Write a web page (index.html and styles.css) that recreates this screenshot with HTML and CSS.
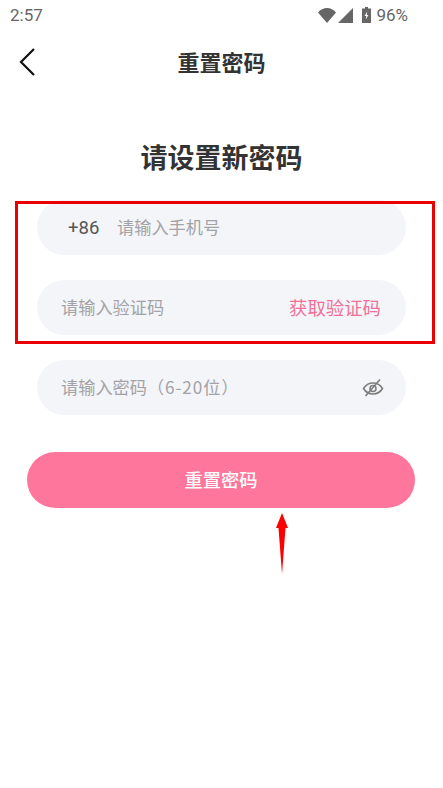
FILE: index.html
```html
<!DOCTYPE html>
<html lang="zh-CN">
<head>
<meta charset="UTF-8">
<meta name="viewport" content="width=device-width, initial-scale=1.0">
<title>重置密码</title>
<link rel="stylesheet" href="styles.css">
</head>
<body>
<div class="page">
  <div class="status-bar">
    <span class="time">2:57</span>
    <div class="status-icons">
      <svg class="wifi" width="18" height="15" viewBox="0 0 18 15"><path d="M0 4.500C2.500 1.500 5.500 0 9 0S15.500 1.500 18 4.500L9 15Z" fill="#666"/></svg>
      <svg class="signal" width="15" height="15" viewBox="0 0 15 15"><path d="M15 0V15H0Z" fill="#666"/></svg>
      <svg class="battery" width="9" height="16" viewBox="0 0 9 16"><path d="M3 0H6V1.500H9V16H0V1.500H3Z" fill="#666"/><path d="M5.200 4.500L2.600 9H4.300L3.800 12.500L6.400 8H4.700Z" fill="#fff"/></svg>
      <span class="battery-text">96%</span>
    </div>
  </div>

  <div class="nav-bar">
    <svg class="back" width="16" height="28" viewBox="0 0 16 28"><path d="M15 1L2 14L15 27" fill="none" stroke="#111" stroke-width="2.200"/></svg>
    <h2>重置密码</h2>
  </div>

  <h1>请设置新密码</h1>

  <div class="form">
    <div class="field">
      <span class="code">+86</span>
      <span class="hint">请输入手机号</span>
    </div>
    <div class="field">
      <span class="hint">请输入验证码</span>
      <span class="get-code">获取验证码</span>
    </div>
    <div class="field">
      <span class="hint">请输入密码<span class="hint-range">（6-20位）</span></span>
      <svg class="eye" width="22" height="20" viewBox="0 0 22 20"><path d="M1.500 10.500C4 6.500 7 5 11 5S18 6.500 20.500 10.500C18 14.500 15 16 11 16S4 14.500 1.500 10.500Z" fill="none" stroke="#7d7d7d" stroke-width="1.600"/><circle cx="11" cy="10.500" r="3" fill="none" stroke="#7d7d7d" stroke-width="1.600"/><path d="M18 1.500L3.500 18" stroke="#7d7d7d" stroke-width="1.600"/></svg>
    </div>
  </div>

  <button class="submit">重置密码</button>

  <div class="mark-box"></div>
  <svg class="mark-arrow" width="12" height="61" viewBox="0 0 12 61"><path d="M6 0L12 15H9.500L6 61L2.500 15H0Z" fill="#f00"/></svg>
</div>
</body>
</html>
```

FILE: styles.css
```css
* {
  box-sizing: border-box;
}
body {
  margin: 0;
  background-color: #fff;
  font-family: "Noto Sans CJK SC", "Noto Sans", sans-serif;
}
.page {
  position: relative;
  width: 443px;
  height: 788px;
  overflow: hidden;
}
.status-bar {
  display: flex;
  justify-content: space-between;
  align-items: center;
  height: 30px;
  padding: 0 35px 0 10px;
  color: #666;
  font-family: Roboto, sans-serif;
  font-size: 17px;
}
.status-icons {
  display: flex;
  align-items: center;
}
.signal {
  margin-left: 2px;
}
.battery {
  margin-left: 9px;
}
.battery-text {
  margin-left: 5px;
}
.nav-bar {
  position: relative;
  display: flex;
  justify-content: center;
  align-items: center;
  height: 66px;
  padding-bottom: 4px;
}
.nav-bar h2 {
  margin: 0;
  color: #333;
  font-size: 22px;
  font-weight: 700;
}
.back {
  position: absolute;
  left: 19px;
  top: 18px;
}
h1 {
  margin: 39px 0 0;
  height: 44px;
  line-height: 44px;
  text-align: center;
  color: #333;
  font-size: 27px;
  font-weight: 700;
}
.form {
  display: flex;
  flex-direction: column;
  gap: 25px;
  margin: 21px 37px 0;
}
.field {
  display: flex;
  align-items: center;
  height: 55px;
  padding: 0 25px 2px 24px;
  border-radius: 28px;
  background-color: #f4f5f9;
  font-size: 17.200px;
}
.code {
  width: 56px;
  padding: 3px 0 0 7px;
  color: #555;
  font-family: Roboto, sans-serif;
  font-size: 18.500px;
}
.hint {
  color: #a3a3a6;
}
.hint-range {
  letter-spacing: 0.900px;
}
.get-code {
  margin-left: auto;
  color: #f0709a;
  font-size: 18.400px;
}
.eye {
  margin: 2px -3px 0 auto;
}
.submit {
  display: block;
  width: 388px;
  height: 56px;
  margin: 37px 0 0 27px;
  padding-bottom: 3px;
  border: none;
  border-radius: 28px;
  background-color: #fe769b;
  color: #fff;
  font-family: inherit;
  font-size: 18.300px;
  font-weight: 500;
}
.mark-box {
  position: absolute;
  left: 15px;
  top: 201px;
  width: 420px;
  height: 143px;
  border: 3px solid #ea0000;
}
.mark-arrow {
  position: absolute;
  left: 276px;
  top: 513px;
}
```
